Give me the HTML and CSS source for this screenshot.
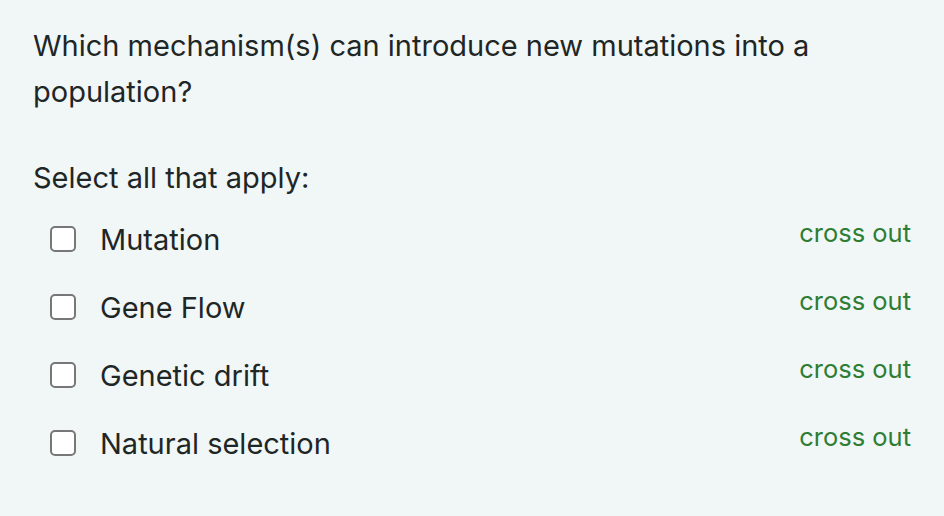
FILE: index.html
```html
<!DOCTYPE html>
<html>
<head>
<meta charset="utf-8">
<link rel="stylesheet" href="styles.css">
</head>
<body>
<div class="question">
  <p class="prompt">Which mechanism(s) can introduce new mutations into a population?</p>
  <p class="instruction">Select all that apply:</p>
  <ul class="options">
    <li class="option"><label class="choice"><span class="box"></span><span class="label">Mutation</span></label><a class="cross">cross out</a></li>
    <li class="option"><label class="choice"><span class="box"></span><span class="label">Gene Flow</span></label><a class="cross">cross out</a></li>
    <li class="option"><label class="choice"><span class="box"></span><span class="label">Genetic drift</span></label><a class="cross">cross out</a></li>
    <li class="option"><label class="choice"><span class="box"></span><span class="label">Natural selection</span></label><a class="cross">cross out</a></li>
  </ul>
</div>
</body>
</html>
```
FILE: styles.css
```css
html, body {
  margin: 0;
  padding: 0;
  background: #f1f7f7;
}
body {
  font-family: "Inter", "Noto Sans", sans-serif;
  color: #1f2626;
  width: 944px;
  height: 516px;
  overflow: hidden;
}
.question {
  padding: 23px 33px 0 33px;
}
.prompt {
  margin: 0;
  font-size: 29px;
  line-height: 46px;
  width: 820px;
}
.instruction {
  margin: 40px 0 0 0;
  font-size: 29px;
  line-height: 46px;
}
.options {
  list-style: none;
  margin: 18px 0 0 0;
  padding: 0;
}
.option {
  display: flex;
  justify-content: space-between;
  align-items: flex-start;
  height: 68px;
}
.choice {
  display: flex;
  align-items: center;
  gap: 24px;
  padding-left: 17px;
  height: 40px;
}
.box {
  width: 22px;
  height: 22px;
  border: 2px solid #777;
  border-radius: 5px;
  background: #fff;
}
.label {
  font-size: 29px;
}
.cross {
  color: #2e7d32;
  font-size: 25.5px;
  line-height: 28px;
  margin-right: 0;
}
```
